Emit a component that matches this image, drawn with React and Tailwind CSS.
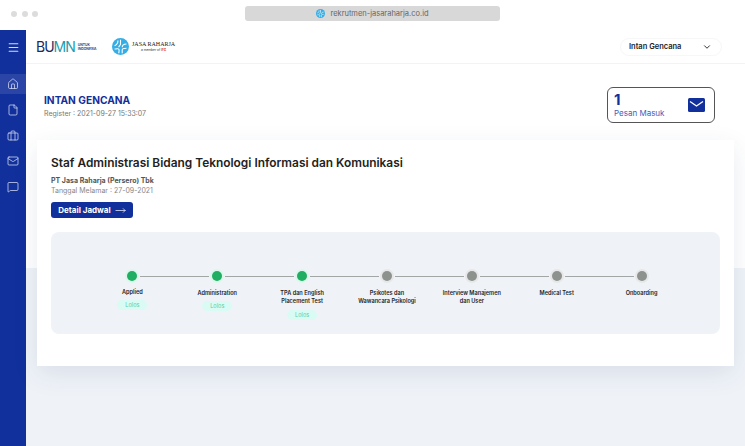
import React from "react";
import { Menu, Home, File, Briefcase, Mail, MessageSquare, ChevronDown, MoveRight } from "lucide-react";

const steps = [
  { label: "Applied", done: true, up: true },
  { label: "Administration", done: true },
  { label: "TPA dan English Placement Test", done: true, w: "w-[56px]", far: true },
  { label: "Psikotes dan Wawancara Psikologi", w: "w-[62px]" },
  { label: "Interview Manajemen dan User", w: "w-[62px]" },
  { label: "Medical Test" },
  { label: "Onboarding", last: true },
];

function JrLogo({ className }) {
  return (
    <svg viewBox="0 0 20 20" className={className}>
      <circle cx="10" cy="10" r="10" fill="#35aee6" />
      <path d="M3 9c3-1 4-3 4-6M10 2v5c0 2-2 2-2 4M17 7c-3 0-5 1-5 4M3 13c3 0 4-1 5 0s0 3 0 5M12 18v-4c0-2 2-2 5-2" fill="none" stroke="#fff" strokeWidth="1.3" />
    </svg>
  );
}

function Step({ s }) {
  return (
    <div className="relative flex flex-col items-center">
      {!s.last && <div className="absolute left-[50%] top-[6px] ml-[8px] h-px w-[69px] bg-[#a3a6a5]" />}
      <div className={`mt-[1px] h-[10px] w-[10px] rounded-full ring-[2px] ${s.done ? "bg-[#1fae62] ring-[#dcf7ea]" : "bg-[#8d928f] ring-[#e6e7e6]"}`} />
      <div className={`text-center text-[5.6px] font-semibold leading-[8px] text-[#222] ${s.up ? "mt-[7px]" : "mt-[8px]"} ${s.w || ""}`}>{s.label}</div>
      {s.done && (
        <div className={`flex h-[10px] w-[30px] items-center justify-center rounded-full bg-[#d9fbf3] text-[5.6px] text-[#5ccfa6] ${s.far ? "mt-[5px]" : "mt-[4px]"}`}>Lolos</div>
      )}
    </div>
  );
}

export default function App() {
  return (
    <div className="flex h-[446px] w-[745px] flex-col overflow-hidden bg-white font-['Inter',sans-serif]">
      <div className="flex h-[30px] shrink-0 items-start">
        <div className="flex gap-[4.5px] pl-[11px] pt-[11px]">
          <span className="h-[6px] w-[6px] rounded-full bg-[#dcdcdc]" />
          <span className="h-[6px] w-[6px] rounded-full bg-[#dcdcdc]" />
          <span className="h-[6px] w-[6px] rounded-full bg-[#dcdcdc]" />
        </div>
        <div className="ml-[207px] mt-[6px] flex h-[15px] w-[255px] items-center justify-center gap-[5px] rounded-[3px] bg-[#d8d8d8] text-[7.5px] text-[#666]">
          <JrLogo className="h-[9px] w-[9px]" />
          <span>rekrutmen-jasaraharja.co.id</span>
        </div>
      </div>

      <div className="flex min-h-0 flex-1">
        <aside className="flex w-[26px] shrink-0 flex-col items-center bg-[#12309b] text-[#d5dcf4]">
          <div className="flex h-[34px] items-center"><Menu size={13} strokeWidth={2} /></div>
          <div className="mt-[10px] flex h-[20px] w-full items-center justify-center bg-white/10"><Home size={12} strokeWidth={1.5} /></div>
          <div className="mt-[3px] flex h-[26px] w-full items-center justify-center"><File size={12} strokeWidth={1.5} /></div>
          <div className="flex h-[25px] w-full items-center justify-center"><Briefcase size={12} strokeWidth={1.5} /></div>
          <div className="flex h-[26px] w-full items-center justify-center"><Mail size={12} strokeWidth={1.5} /></div>
          <div className="flex h-[26px] w-full items-center justify-center"><MessageSquare size={12} strokeWidth={1.5} /></div>
        </aside>

        <main className="flex min-w-0 flex-1 flex-col bg-[linear-gradient(#fff_0,#fff_238px,#eff3f8_238px)]">
          <header className="flex h-[34px] shrink-0 items-center border-b border-[#f3f3f3] pl-[10px] pr-[23px]">
            <div className="flex items-center">
              <div className="flex w-[62px] items-center">
                <div className="flex items-center text-[14px] font-normal leading-none tracking-[-1px]">
                  <span className="text-[#1b2a63]">BU</span>
                  <span className="text-[#1c9cb0]">MN</span>
                </div>
                <div className="ml-[3px] text-[3.4px] font-semibold leading-[4px] text-[#1b2a63]">UNTUK<br />INDONESIA</div>
              </div>
              <JrLogo className="ml-[14px] h-[17px] w-[17px]" />
              <div className="ml-[3px] flex flex-col items-center">
                <div className="font-['Liberation_Serif',serif] text-[6px] leading-[8px] text-[#222]">JASA RAHARJA</div>
                <div className="text-[3.2px] leading-[5px] text-[#333]">a member of <span className="font-bold text-[#e0343b]">IFG</span></div>
              </div>
            </div>
            <div className="ml-auto flex h-[18px] w-[102px] items-center justify-between rounded-full border border-[#f7f7f7] pl-[8px] pr-[9px]">
              <span className="text-[7.5px] font-semibold text-[#222]">Intan Gencana</span>
              <ChevronDown size={10} strokeWidth={2.2} className="text-[#222]" />
            </div>
          </header>

          <div className="flex items-start pl-[18px] pr-[30px] pt-[23px]">
            <div className="pt-[7px]">
              <div className="text-[10.2px] font-bold leading-[13px] text-[#12309b]">INTAN GENCANA</div>
              <div className="text-[7px] leading-[13px] text-[#777]">Register : 2021-09-27 15:33:07</div>
            </div>
            <div className="ml-auto flex h-[36px] w-[108px] items-center justify-between rounded-[6px] border border-[#555] pl-[6px] pr-[9px]">
              <div className="pt-[2px]">
                <div className="text-[15px] font-bold leading-[14px] text-[#12309b]">1</div>
                <div className="text-[8px] leading-[12px] text-[#4560b8]">Pesan Masuk</div>
              </div>
              <svg viewBox="0 0 17 14" className="h-[14px] w-[17px]">
                <rect width="17" height="14" rx="1.5" fill="#12309b" />
                <path d="M2 3.5l6.5 4.5 6.5-4.5" fill="none" stroke="#fff" strokeWidth="1.3" />
              </svg>
            </div>
          </div>

          <section className="ml-[11px] mt-[17px] h-[226px] w-[697px] bg-white px-[14px] pt-[15px] shadow-[0_8px_24px_rgba(40,60,110,0.10)]">
            <h1 className="text-[11.9px] font-semibold leading-[16px] text-[#222]">Staf Administrasi Bidang Teknologi Informasi dan Komunikasi</h1>
            <div className="mt-[5px] text-[7px] font-bold leading-[10px] text-[#555]">PT Jasa Raharja (Persero) Tbk</div>
            <div className="text-[7px] leading-[10px] text-[#888]">Tanggal Melamar : 27-09-2021</div>
            <button className="mt-[6px] flex h-[16px] w-[82px] items-center justify-center gap-[4px] rounded-[3px] bg-[#12309b] text-[8px] font-bold text-white">
              Detail Jadwal <MoveRight size={11} strokeWidth={1.5} />
            </button>
            <div className="mt-[14px] h-[102px] w-[669px] rounded-[8px] bg-[#eff3f8] pl-[39px] pr-[36px] pt-[38px]">
              <div className="grid grid-cols-7">
                {steps.map((s) => <Step key={s.label} s={s} />)}
              </div>
            </div>
          </section>
        </main>
      </div>
    </div>
  );
}
